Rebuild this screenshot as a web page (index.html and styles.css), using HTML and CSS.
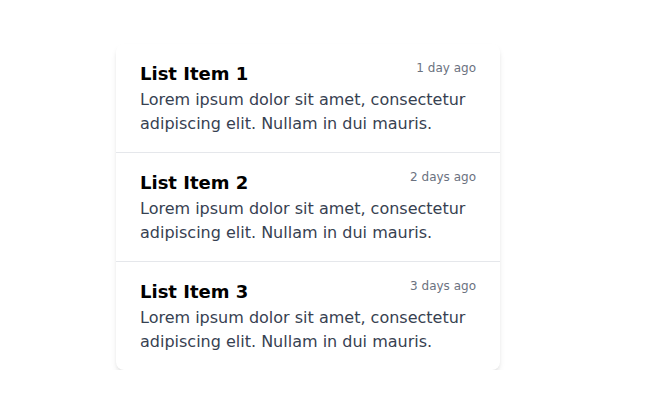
FILE: index.html
```html
<!DOCTYPE html>
<html>
<head>
<meta charset="utf-8">
<link rel="stylesheet" href="styles.css">
</head>
<body>
<div class="page">
  <ul class="card">
    <li class="item">
      <div class="head">
        <h3 class="title">List Item 1</h3>
        <span class="date">1 day ago</span>
      </div>
      <p class="text">Lorem ipsum dolor sit amet, consectetur adipiscing elit. Nullam in dui mauris.</p>
    </li>
    <li class="item">
      <div class="head">
        <h3 class="title">List Item 2</h3>
        <span class="date">2 days ago</span>
      </div>
      <p class="text">Lorem ipsum dolor sit amet, consectetur adipiscing elit. Nullam in dui mauris.</p>
    </li>
    <li class="item">
      <div class="head">
        <h3 class="title">List Item 3</h3>
        <span class="date">3 days ago</span>
      </div>
      <p class="text">Lorem ipsum dolor sit amet, consectetur adipiscing elit. Nullam in dui mauris.</p>
    </li>
  </ul>
</div>
</body>
</html>
```
FILE: styles.css
```css
html, body {
  margin: 0;
  padding: 0;
  background: #ffffff;
  font-family: "DejaVu Sans", sans-serif;
}
.page {
  width: 616px;
  padding-top: 44px;
}
.card {
  list-style: none;
  margin: 0 auto;
  padding: 0;
  width: 384px;
  background: #fff;
  border-radius: 8px;
  box-shadow: 0 4px 6px -1px rgba(0,0,0,0.1), 0 2px 4px -2px rgba(0,0,0,0.1);
}
.item {
  padding: 16px 24px;
  border-bottom: 1px solid #e5e7eb;
}
.item:last-child {
  border-bottom: none;
}
.head {
  display: flex;
  justify-content: space-between;
  align-items: flex-start;
}
.title {
  margin: 0;
  font-size: 18px;
  line-height: 28px;
  font-weight: 700;
  color: #000;
}
.date {
  font-size: 12px;
  line-height: 16px;
  color: #6b7280;
}
.text {
  margin: 0;
  font-size: 16px;
  line-height: 24px;
  color: #374151;
}
```
